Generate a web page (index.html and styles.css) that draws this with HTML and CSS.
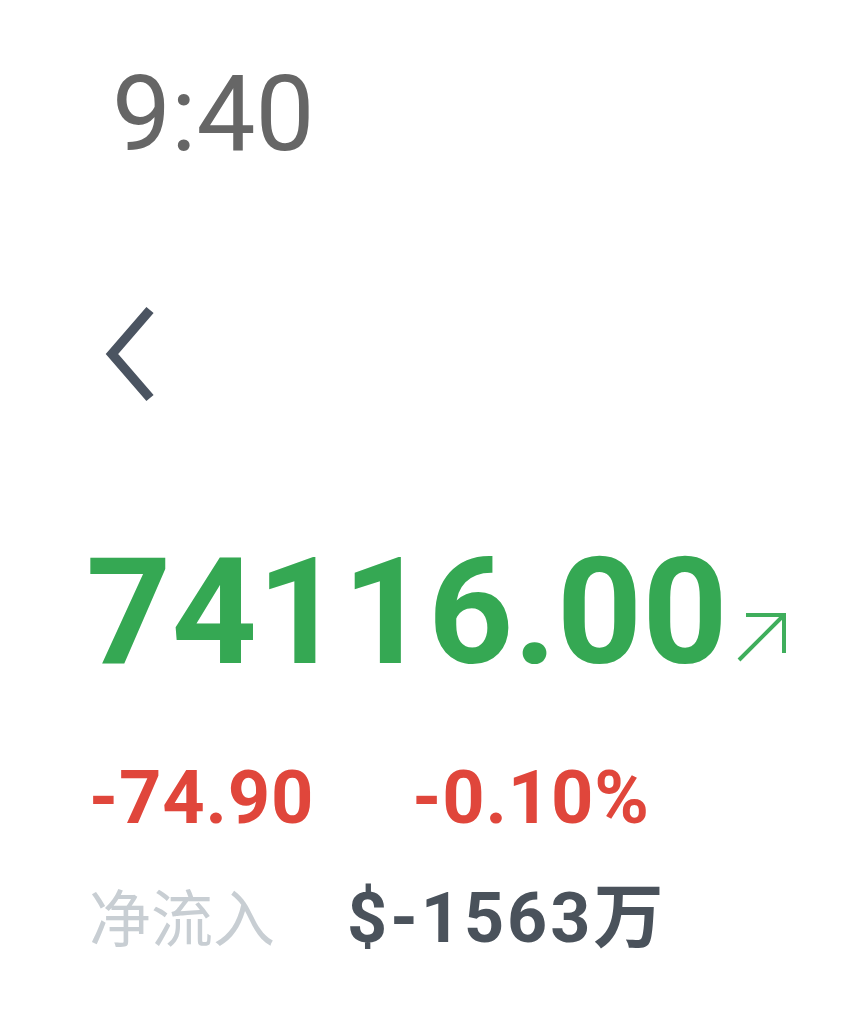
FILE: index.html
```html
<!DOCTYPE html>
<html lang="zh-CN">
<head>
<meta charset="utf-8">
<title>Quote</title>
<link rel="stylesheet" href="styles.css">
</head>
<body>
<div class="screen">
  <div class="status">9:40</div>
  <div class="nav">
    <svg class="back" width="64" height="108" viewBox="0 0 64 108">
      <polyline points="50,10 12,54 50,98" fill="none" stroke="#4b5461" stroke-width="9.5" stroke-linejoin="miter"/>
    </svg>
  </div>
  <div class="price">
    <span class="price-value">74116.00</span>
    <svg class="trend" width="52" height="52" viewBox="0 0 52 52">
      <path d="M3 49 L47 5 M10 4 H48 V42" fill="none" stroke="#3fae5c" stroke-width="4"/>
    </svg>
  </div>
  <div class="change">
    <span class="change-abs">-74.90</span>
    <span class="change-pct">-0.10%</span>
  </div>
  <div class="flow">
    <span class="flow-label">净流入</span>
    <span class="flow-value">$-1563万</span>
  </div>
</div>
</body>
</html>
```
FILE: styles.css
```css
html, body {
  margin: 0;
  padding: 0;
  background: #ffffff;
}
.screen {
  width: 845px;
  height: 1024px;
  box-sizing: border-box;
  padding-left: 86px;
  font-family: Roboto, "Noto Sans CJK SC", sans-serif;
  overflow: hidden;
}
.status {
  padding-top: 62px;
  padding-left: 26px;
  font-size: 105px;
  line-height: 1;
  color: #666666;
}
.nav {
  margin-top: 133px;
  padding-left: 14px;
  height: 108px;
}
.back {
  display: block;
}
.price {
  margin-top: 130px;
  display: flex;
  align-items: baseline;
  gap: 8px;
}
.price-value {
  font-size: 149px;
  line-height: 149px;
  font-weight: 700;
  color: #35a853;
}
.trend {
  display: block;
}
.change {
  margin-top: 74px;
  display: flex;
  gap: 98px;
  font-size: 74px;
  line-height: 74px;
  font-weight: 700;
  letter-spacing: 0.8px;
  color: #e0463b;
  padding-left: 3px;
}
.flow {
  margin-top: 45px;
  display: flex;
  align-items: baseline;
  gap: 72px;
  line-height: 70px;
}
.flow-label {
  font-family: "Noto Sans CJK SC", sans-serif;
  font-size: 62px;
  color: #c8ced3;
  padding-left: 3px;
}
.flow-value {
  font-size: 70px;
  font-weight: 700;
  letter-spacing: 3px;
  color: #4a525b;
}
```
